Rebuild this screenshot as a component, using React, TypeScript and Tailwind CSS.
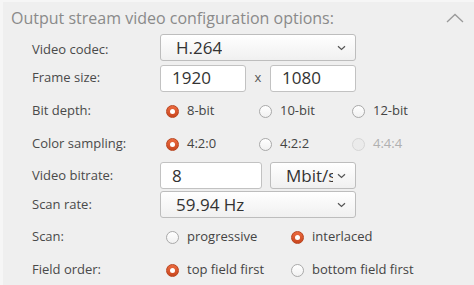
import React from 'react';

const font = { fontFamily: '"Open Sans", "Noto Sans", sans-serif' };

function Radio({ checked = false, disabled = false, label }: { checked?: boolean; disabled?: boolean; label: string }) {
  return (
    <div className="flex items-center">
      {checked ? (
        <span className="w-[13px] h-[13px] rounded-full bg-gradient-to-b from-[#ec6b3f] to-[#c9461e] border border-[#b8441f] flex items-center justify-center">
          <span className="w-[5px] h-[5px] rounded-full bg-white" />
        </span>
      ) : disabled ? (
        <span className="w-[13px] h-[13px] rounded-full bg-[#ebebeb] border border-[#d6d6d6]" />
      ) : (
        <span className="w-[13px] h-[13px] rounded-full bg-gradient-to-b from-white to-[#f1f1f1] border border-[#a9a9a9]" />
      )}
      <span className={`ml-[8px] text-[13px] ${disabled ? 'text-[#b0b0b0]' : 'text-[#444]'}`}>{label}</span>
    </div>
  );
}

function Chevron({ className = '' }: { className?: string }) {
  return (
    <svg width="9" height="6" viewBox="0 0 9 6" className={className}>
      <path d="M1 1.2 L4.5 4.5 L8 1.2" fill="none" stroke="#555" strokeWidth="1.2" />
    </svg>
  );
}

function Select({ value, className = '' }: { value: string; className?: string }) {
  return (
    <div
      className={`relative h-[27px] rounded-[3px] border border-[#bdbdbd] bg-gradient-to-b from-white to-[#f0f0f0] flex items-center pr-[22px] ${className}`}
    >
      <span className="pl-[15px] text-[17px] text-[#333] whitespace-nowrap overflow-hidden">{value}</span>
      <Chevron className="absolute right-[9px] top-[10px]" />
    </div>
  );
}

function Input({ value, className = '' }: { value: string; className?: string }) {
  return (
    <div className={`h-[27px] rounded-[3px] border border-[#c2c2c2] bg-white flex items-center pl-[11px] text-[17px] text-[#333] ${className}`}>
      {value}
    </div>
  );
}

function Row({ label, h, children, labelPad = '' }: { label: string; h: string; children: React.ReactNode; labelPad?: string }) {
  return (
    <div className={`flex items-center ${h}`}>
      <div className={`w-[128px] text-[13px] text-[#4a4a4a] ${labelPad}`}>{label}</div>
      <div className="flex items-center">{children}</div>
    </div>
  );
}

export default function App() {
  return (
    <div style={font} className="w-[474px] h-[285px] overflow-hidden bg-[#efefef] border-l-[3px] border-t-[2px] border-[#f6f6f6]">
      <div className="flex items-center justify-between h-[31px] pl-[8px] pr-[10px]">
        <span className="text-[16px] text-[#8a8a8a]">Output stream video configuration options:</span>
        <svg width="18" height="10" viewBox="0 0 18 10">
          <path d="M1 9 L9 1.5 L17 9" fill="none" stroke="#9a9a9a" strokeWidth="1.3" />
        </svg>
      </div>
      <div className="pl-[29px]">
        <Row label="Video codec:" h="h-[29px]" labelPad="pt-[5px]">
          <Select value="H.264" className="w-[196px]" />
        </Row>
        <Row label="Frame size:" h="h-[32px]">
          <Input value="1920" className="w-[86px]" />
          <span className="w-[24px] text-center text-[13px] text-[#555]">x</span>
          <Input value="1080" className="w-[86px]" />
        </Row>
        <Row label="Bit depth:" h="h-[34px]">
          <div className="pl-[6px] flex">
            <div className="w-[93px]"><Radio checked label="8-bit" /></div>
            <div className="w-[93px]"><Radio label="10-bit" /></div>
            <Radio label="12-bit" />
          </div>
        </Row>
        <Row label="Color sampling:" h="h-[32px]">
          <div className="pl-[6px] flex">
            <div className="w-[93px]"><Radio checked label="4:2:0" /></div>
            <div className="w-[93px]"><Radio label="4:2:2" /></div>
            <Radio disabled label="4:4:4" />
          </div>
        </Row>
        <Row label="Video bitrate:" h="h-[31px]">
          <Input value="8" className="w-[102px]" />
          <Select value="Mbit/s" className="w-[86px] ml-[8px]" />
        </Row>
        <Row label="Scan rate:" h="h-[27px]">
          <Select value="59.94 Hz" className="w-[196px]" />
        </Row>
        <Row label="Scan:" h="h-[38px]">
          <div className="pl-[6px] flex">
            <div className="w-[125px]"><Radio label="progressive" /></div>
            <Radio checked label="interlaced" />
          </div>
        </Row>
        <Row label="Field order:" h="h-[28px]">
          <div className="pl-[6px] flex">
            <div className="w-[125px]"><Radio checked label="top field first" /></div>
            <Radio label="bottom field first" />
          </div>
        </Row>
      </div>
    </div>
  );
}
